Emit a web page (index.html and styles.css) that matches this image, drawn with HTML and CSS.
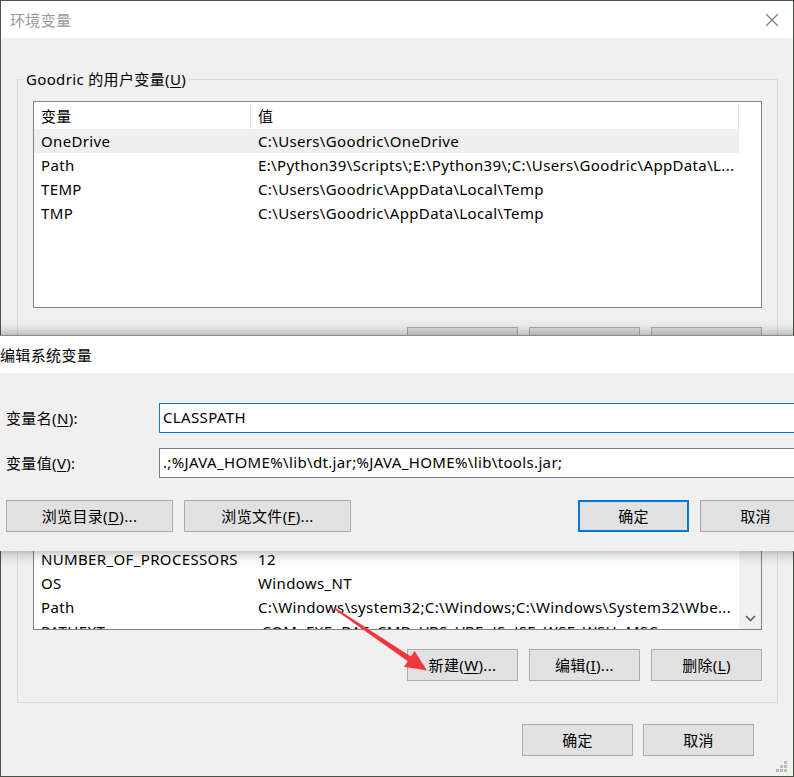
FILE: index.html
```html
<!DOCTYPE html>
<html lang="zh-CN">
<head>
  <meta charset="UTF-8">
  <meta name="viewport" content="width=device-width, initial-scale=1.0">
  <title>环境变量</title>
  <link rel="stylesheet" href="styles.css">
</head>
<body>
  <div class="window">
    <div class="titlebar">
      <span class="title">环境变量</span>
      <svg class="close" width="14" height="14" viewBox="0 0 14 14">
        <path d="M1 1 L13 13 M13 1 L1 13" stroke="#7a7a7a" stroke-width="1.1" fill="none"/>
      </svg>
    </div>

    <div class="window-body">
      <fieldset class="group">
        <legend>Goodric 的用户变量(<u>U</u>)</legend>
        <div class="list">
          <div class="list-cols">
            <div class="list-head">
              <span class="col-name">变量</span>
              <span class="col-value">值</span>
            </div>
            <div class="row selected"><span class="col-name">OneDrive</span><span class="col-value">C:\Users\Goodric\OneDrive</span></div>
            <div class="row"><span class="col-name">Path</span><span class="col-value">E:\Python39\Scripts\;E:\Python39\;C:\Users\Goodric\AppData\L...</span></div>
            <div class="row"><span class="col-name">TEMP</span><span class="col-value">C:\Users\Goodric\AppData\Local\Temp</span></div>
            <div class="row"><span class="col-name">TMP</span><span class="col-value">C:\Users\Goodric\AppData\Local\Temp</span></div>
          </div>
        </div>
        <div class="button-row">
          <button class="btn">新建(<u>N</u>)...</button>
          <button class="btn">编辑(<u>E</u>)...</button>
          <button class="btn">删除(<u>D</u>)</button>
        </div>
      </fieldset>

      <fieldset class="group group-system">
        <legend>系统变量(<u>S</u>)</legend>
        <div class="list">
          <div class="list-cols">
            <div class="list-head">
              <span class="col-name">变量</span>
              <span class="col-value">值</span>
            </div>
            <div class="row"><span class="col-name">CLASSPATH</span><span class="col-value">.;%JAVA_HOME%\lib\dt.jar;%JAVA_HOME%\lib\tools.jar;</span></div>
            <div class="row"><span class="col-name">ComSpec</span><span class="col-value">C:\Windows\system32\cmd.exe</span></div>
            <div class="row"><span class="col-name">DriverData</span><span class="col-value">C:\Windows\System32\Drivers\DriverData</span></div>
            <div class="row"><span class="col-name">JAVA_HOME</span><span class="col-value">C:\Program Files\Java\jdk1.8.0_281</span></div>
            <div class="row"><span class="col-name">NUMBER_OF_PROCESSORS</span><span class="col-value">12</span></div>
            <div class="row"><span class="col-name">OS</span><span class="col-value">Windows_NT</span></div>
            <div class="row"><span class="col-name">Path</span><span class="col-value">C:\Windows\system32;C:\Windows;C:\Windows\System32\Wbe...</span></div>
            <div class="row"><span class="col-name">PATHEXT</span><span class="col-value">.COM;.EXE;.BAT;.CMD;.VBS;.VBE;.JS;.JSE;.WSF;.WSH;.MSC</span></div>
          </div>
          <div class="scrollbar">
            <svg class="chevron" width="11" height="7" viewBox="0 0 11 7">
              <path d="M1 1 L5.5 5.5 L10 1" stroke="#606060" stroke-width="1.6" fill="none"/>
            </svg>
          </div>
        </div>
        <div class="button-row">
          <button class="btn">新建(<u>W</u>)...</button>
          <button class="btn">编辑(<u>I</u>)...</button>
          <button class="btn">删除(<u>L</u>)</button>
        </div>
      </fieldset>

      <div class="footer">
        <button class="btn">确定</button>
        <button class="btn">取消</button>
      </div>
    </div>

    <svg class="grip" width="12" height="12" viewBox="0 0 12 12">
      <rect x="8" y="0" width="3" height="3" fill="#bdbdbd"/>
      <rect x="4" y="4" width="3" height="3" fill="#bdbdbd"/>
      <rect x="8" y="4" width="3" height="3" fill="#bdbdbd"/>
      <rect x="0" y="8" width="3" height="3" fill="#bdbdbd"/>
      <rect x="4" y="8" width="3" height="3" fill="#bdbdbd"/>
      <rect x="8" y="8" width="3" height="3" fill="#bdbdbd"/>
    </svg>
  </div>

  <!-- edit dialog lying over the main window -->
  <div class="dialog">
    <div class="dialog-title">编辑系统变量</div>
    <div class="dialog-body">
      <div class="field">
        <label class="field-label">变量名(<u>N</u>):</label>
        <div class="input focused">CLASSPATH</div>
      </div>
      <div class="field">
        <label class="field-label">变量值(<u>V</u>):</label>
        <div class="input">.;%JAVA_HOME%\lib\dt.jar;%JAVA_HOME%\lib\tools.jar;</div>
      </div>
      <div class="dialog-buttons">
        <div class="btn-group">
          <button class="btn btn-wide">浏览目录(<u>D</u>)...</button>
          <button class="btn btn-wide">浏览文件(<u>F</u>)...</button>
        </div>
        <div class="btn-group">
          <button class="btn btn-default">确定</button>
          <button class="btn">取消</button>
        </div>
      </div>
    </div>
  </div>

  <svg class="arrow" width="794" height="777" viewBox="0 0 794 777">
    <polygon fill="#f2373c" points="334.4,607.3 410.9,656.4 414.6,651 427,670.5 404,666.7 407.8,661.2 333.6,608.7"/>
  </svg>
</body>
</html>
```

FILE: styles.css
```css
body {
  margin: 0;
  width: 794px;
  height: 777px;
  overflow: hidden;
  position: relative;
  background: #3f4a3c;
  font-family: "Noto Sans", "Noto Sans CJK SC", sans-serif;
  font-size: 15px;
  letter-spacing: 0.35px;
  color: #000;
}
u {
  text-decoration-thickness: 1px;
  text-underline-offset: 2px;
}
.window {
  position: relative;
  box-sizing: border-box;
  width: 794px;
  height: 777px;
  border: 1px solid #4b5547;
  background: #f0f0f0;
}
.titlebar {
  height: 37px;
  background: #fff;
  display: flex;
  align-items: center;
  justify-content: space-between;
  padding: 0 14px 0 9px;
}
.title {
  color: #999;
  font-family: "Noto Sans CJK SC", sans-serif;
}
.close {
  display: block;
}
.window-body {
  padding: 31px 15px 0 16px;
}
.group {
  margin: 0;
  min-width: 0;
  border: 1px solid #dcdcdc;
  padding: 12px 15px 21px;
}
.group legend {
  margin-left: -9px;
  padding: 0 2px;
  line-height: 20px;
}
.group-system {
  margin-top: 10px;
}
.list {
  height: 207px;
  box-sizing: border-box;
  border: 1px solid #828282;
  background: #fff;
  display: flex;
  overflow: hidden;
}
.list-cols {
  width: 705px;
  flex: none;
}
.list-head {
  height: 27px;
  display: flex;
  align-items: center;
  padding-top: 2px;
  box-sizing: border-box;
}
.list-head .col-name {
  border-right: 1px solid #e5e5e5;
  box-sizing: border-box;
  height: 25px;
  line-height: 25px;
}
.list-head .col-value {
  border-right: 1px solid #e5e5e5;
  height: 25px;
  line-height: 25px;
}
.row {
  height: 24px;
  line-height: 24px;
  display: flex;
}
.row.selected {
  background: #efefef;
}
.col-name {
  width: 217px;
  flex: none;
  padding-left: 7px;
  box-sizing: border-box;
  white-space: nowrap;
}
.col-value {
  flex: 1;
  padding-left: 7px;
  white-space: nowrap;
  overflow: hidden;
}
.scrollbar {
  flex: 1;
  background: #f0f0f0;
  display: flex;
  flex-direction: column;
  justify-content: flex-end;
  align-items: center;
  padding-bottom: 7px;
}
.chevron {
  display: block;
}
.button-row {
  display: flex;
  justify-content: flex-end;
  gap: 11px;
  margin-top: 19px;
}
.btn {
  width: 111px;
  height: 32px;
  box-sizing: border-box;
  border: 1px solid #adadad;
  background: #e1e1e1;
  font-family: inherit;
  font-size: 15px;
  letter-spacing: 0.35px;
  color: #000;
  padding: 0;
  line-height: 30px;
}
.footer {
  display: flex;
  justify-content: flex-end;
  gap: 10px;
  margin: 21px 24px 0 0;
}
.grip {
  position: absolute;
  right: 5px;
  bottom: 3px;
}

.dialog {
  position: absolute;
  top: 335px;
  left: -10px;
  width: 837px;
  box-sizing: border-box;
  border-top: 1px solid #8c8c8c;
  background: #f0f0f0;
  box-shadow: 0 0 14px rgba(0, 0, 0, 0.4);
}
.dialog-title {
  height: 37px;
  line-height: 37px;
  background: #fff;
  padding-left: 10px;
  font-family: "Noto Sans CJK SC", sans-serif;
}
.dialog-body {
  padding: 30px 16px 19px;
}
.field {
  display: flex;
  align-items: center;
  margin-bottom: 15px;
}
.field-label {
  width: 153px;
  flex: none;
  line-height: 26px;
}
.input {
  flex: 1;
  height: 30px;
  box-sizing: border-box;
  border: 1px solid #7a7a7a;
  background: #fff;
  line-height: 26px;
  padding-left: 3px;
  white-space: nowrap;
}
.input.focused {
  border-color: #0078d7;
}
.dialog-buttons {
  display: flex;
  justify-content: space-between;
  margin-top: 22px;
}
.btn-group {
  display: flex;
  gap: 11px;
}
.btn-wide {
  width: 167px;
}
.btn-default {
  border: 2px solid #0078d7;
  line-height: 28px;
}
.arrow {
  position: absolute;
  left: 0;
  top: 0;
  pointer-events: none;
}
```
